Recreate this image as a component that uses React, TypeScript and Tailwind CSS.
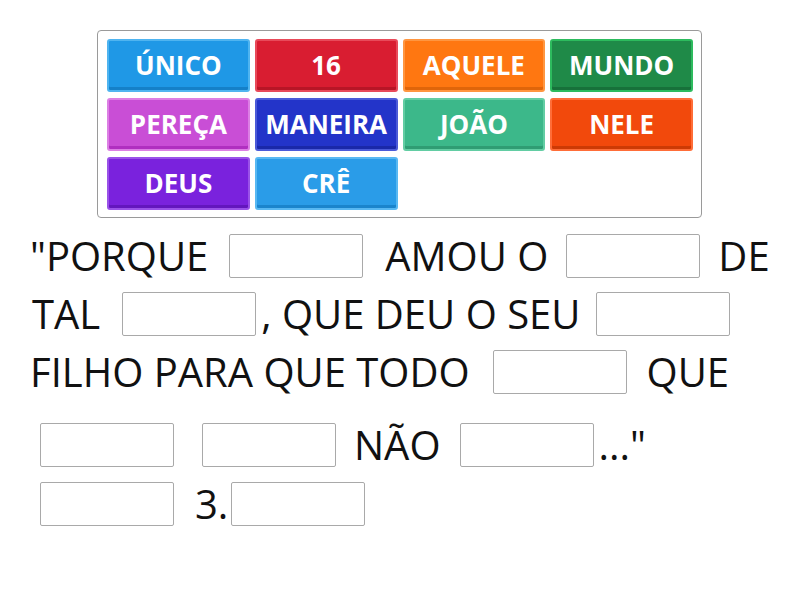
import React from 'react';

const tiles = [
  { label: 'ÚNICO', bg: 'bg-[#1f98e6]', rim: 'border-[#4fb4f0]', shade: 'shadow-[inset_0_-3px_0_#1580c8]' },
  { label: '16', bg: 'bg-[#d91d31]', rim: 'border-[#e84a5a]', shade: 'shadow-[inset_0_-3px_0_#b81526]' },
  { label: 'AQUELE', bg: 'bg-[#ff7711]', rim: 'border-[#ff9640]', shade: 'shadow-[inset_0_-3px_0_#e0650a]' },
  { label: 'MUNDO', bg: 'bg-[#1f8a48]', rim: 'border-[#2dbb5e]', shade: 'shadow-[inset_0_-3px_0_#17713a]' },
  { label: 'PEREÇA', bg: 'bg-[#c94ed6]', rim: 'border-[#dc7fe4]', shade: 'shadow-[inset_0_-3px_0_#b02fc0]' },
  { label: 'MANEIRA', bg: 'bg-[#2334c9]', rim: 'border-[#4b5ad8]', shade: 'shadow-[inset_0_-3px_0_#1a28a8]' },
  { label: 'JOÃO', bg: 'bg-[#3cb88a]', rim: 'border-[#62cda3]', shade: 'shadow-[inset_0_-3px_0_#2f9c73]' },
  { label: 'NELE', bg: 'bg-[#f2490c]', rim: 'border-[#ff6d38]', shade: 'shadow-[inset_0_-3px_0_#cc3a05]' },
  { label: 'DEUS', bg: 'bg-[#7a22dd]', rim: 'border-[#9a52e8]', shade: 'shadow-[inset_0_-3px_0_#6316bd]' },
  { label: 'CRÊ', bg: 'bg-[#2a9ce8]', rim: 'border-[#58b8f2]', shade: 'shadow-[inset_0_-3px_0_#1a84cc]' },
];

function Blank({ className = '' }: { className?: string }) {
  return <div className={`h-[44px] w-[134px] shrink-0 rounded-[2px] border border-[#a9a9a9] bg-white ${className}`} />;
}

function Word({ children, className = '' }: { children: React.ReactNode; className?: string }) {
  return <span className={`shrink-0 whitespace-nowrap leading-none ${className}`}>{children}</span>;
}

export default function App() {
  return (
    <div className="h-[600px] w-[800px] bg-white font-['Open_Sans',sans-serif] text-[#111]">
      {/* word bank */}
      <div className="pt-[30px] pl-[97px]">
        <div className="w-[605px] rounded-[4px] border border-[#9a9a9a] pt-[8px] pb-[7px] pl-[9px] pr-[8px]">
          <div className="grid grid-cols-4 gap-x-[5px] gap-y-[6px]">
            {tiles.map((t) => (
              <div
                key={t.label}
                className={`flex h-[53px] items-center justify-center rounded-[3px] border-2 ${t.bg} ${t.rim} ${t.shade} text-[26px] font-bold text-white`}
              >
                {t.label}
              </div>
            ))}
          </div>
        </div>
      </div>

      {/* sentence */}
      <div className="text-[40px]">
        <div className="mt-[16px] flex h-[44px] items-center">
          <Word className="ml-[30px]">"PORQUE</Word>
          <Blank className="ml-[21px]" />
          <Word className="ml-[22px]">AMOU O</Word>
          <Blank className="ml-[18px]" />
          <Word className="ml-[18px]">DE</Word>
        </div>
        <div className="mt-[14px] flex h-[44px] items-center">
          <Word className="ml-[32px]">TAL</Word>
          <Blank className="ml-[22px]" />
          <Word className="ml-[5px]">, QUE DEU O SEU</Word>
          <Blank className="ml-[16px]" />
        </div>
        <div className="mt-[14px] flex h-[44px] items-center">
          <Word className="ml-[30px]">FILHO PARA QUE TODO</Word>
          <Blank className="ml-[23px]" />
          <Word className="ml-[20px]">QUE</Word>
        </div>
        <div className="mt-[29px] flex h-[44px] items-center">
          <Blank className="ml-[40px]" />
          <Blank className="ml-[28px]" />
          <Word className="ml-[18px]">NÃO</Word>
          <Blank className="ml-[19px]" />
          <Word className="ml-[5px]">..."</Word>
        </div>
        <div className="mt-[15px] flex h-[44px] items-center">
          <Blank className="ml-[40px]" />
          <Word className="ml-[21px]">3.</Word>
          <Blank className="ml-[3px]" />
        </div>
      </div>
    </div>
  );
}
